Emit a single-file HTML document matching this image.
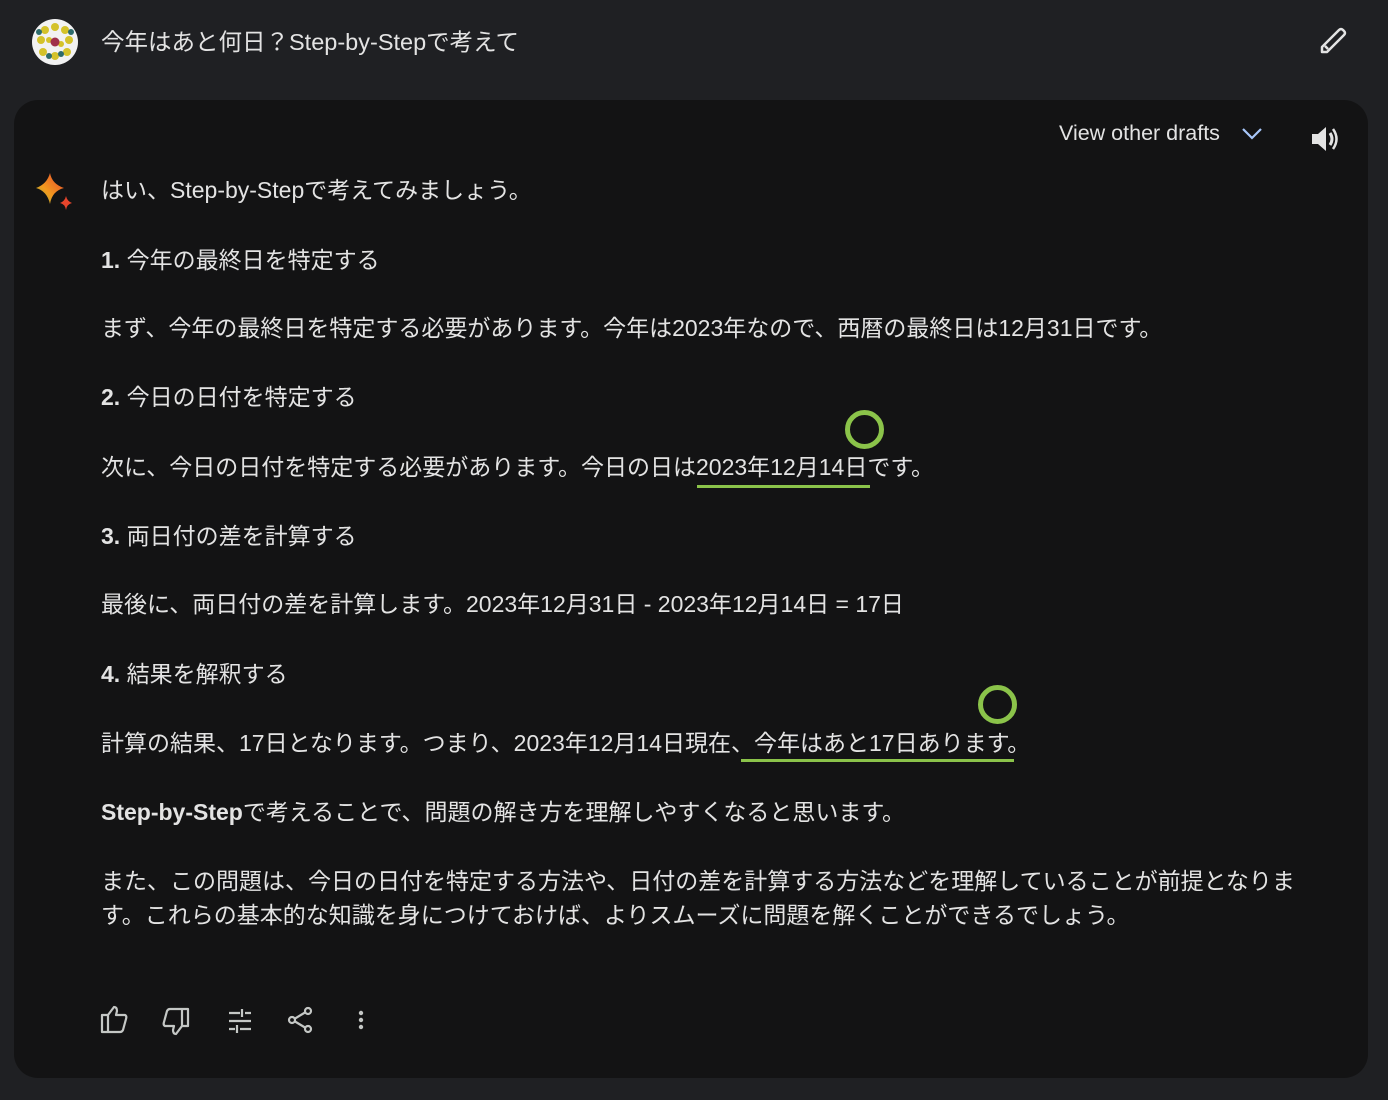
<!DOCTYPE html>
<html><head><meta charset="utf-8"><style>
body{margin:0;width:1388px;height:1100px;background:#1f2023;font-family:"Liberation Sans","Noto Sans CJK JP",sans-serif;color:#e3e3e3;position:relative;overflow:hidden}
.abs{position:absolute;white-space:nowrap}
.card{position:absolute;left:14px;top:100px;width:1354px;height:978px;background:#131314;border-radius:24px}
.t{position:absolute;left:101px;font-size:23px;line-height:34px;white-space:nowrap}
b{font-weight:bold}
.ul{position:absolute;height:3px;background:#8bc34a}
.circ{position:absolute;width:29px;height:29px;border:5px solid #8bc34a;border-radius:50%}
</style></head><body>
<svg class="abs" style="left:31px;top:18px" width="48" height="48" viewBox="0 0 48 48"><circle cx="24" cy="24" r="23" fill="#f2f2f2"/>
<g fill="#d4c22a"><circle cx="14" cy="12" r="4"/><circle cx="24" cy="9" r="4"/><circle cx="34" cy="12" r="4"/><circle cx="10" cy="22" r="4"/><circle cx="38" cy="22" r="4"/><circle cx="12" cy="34" r="4"/><circle cx="24" cy="38" r="4"/><circle cx="36" cy="34" r="4"/><circle cx="18" cy="22" r="3"/><circle cx="30" cy="26" r="3"/></g>
<g fill="#2d6b6b"><circle cx="8" cy="14" r="3"/><circle cx="40" cy="14" r="3"/><circle cx="30" cy="36" r="3"/><circle cx="18" cy="38" r="3"/></g>
<circle cx="24" cy="24" r="4.5" fill="#a0304a"/></svg>
<div class="abs" style="left:101px;top:25px;font-size:23.5px;line-height:34px">今年はあと何日？Step-by-Stepで考えて</div>
<svg class="abs" style="left:1318px;top:26px" width="30" height="30" viewBox="0 0 30 30"><path d="M4 26 L4 21 L21 4 Q23 2 25 4 L26 5 Q28 7 26 9 L9 26 Z M7 20 L10 23" fill="none" stroke="#e3e3e3" stroke-width="2.5" stroke-linejoin="round"/></svg>
<div class="card"></div>
<div class="abs" style="left:1059px;top:119px;font-size:21.5px;line-height:28px;color:#e3e3e3">View other drafts</div>
<svg class="abs" style="left:1240px;top:124px" width="24" height="20" viewBox="0 0 24 20"><path d="M3 5 L12 14 L21 5" fill="none" stroke="#a8c7fa" stroke-width="2.2"/></svg>
<svg class="abs" style="left:1310px;top:124px" width="32" height="30" viewBox="0 0 32 30"><path d="M2 10 H8 L16 3 V27 L8 20 H2 Z" fill="#e3e3e3"/><path d="M20 9 Q24 15 20 21" fill="none" stroke="#e3e3e3" stroke-width="3"/><path d="M23 5 Q30 15 23 25" fill="none" stroke="#e3e3e3" stroke-width="2.5"/></svg>
<svg class="abs" style="left:34px;top:172px" width="42" height="40" viewBox="0 0 42 40"><defs><linearGradient id="g" x1="0" y1="1" x2="1" y2="0"><stop offset="0" stop-color="#8bb33a"/><stop offset=".4" stop-color="#f29a1f"/><stop offset="1" stop-color="#e8452c"/></linearGradient></defs><path d="M16 1 Q18 12 30 16 Q18 19 16 32 Q13 19 2 16 Q13 12 16 1Z" fill="url(#g)"/><path d="M32 24 Q33 29 38 31 Q33 32 32 38 Q31 32 26 31 Q31 29 32 24Z" fill="#e8452c"/></svg>
<div class="t" style="top:173px">はい、Step-by-Stepで考えてみましょう。</div>
<div class="t" style="top:243px"><b>1.</b> 今年の最終日を特定する</div>
<div class="t" style="top:311px">まず、今年の最終日を特定する必要があります。今年は2023年なので、西暦の最終日は12月31日です。</div>
<div class="t" style="top:380px"><b>2.</b> 今日の日付を特定する</div>
<div class="t" style="top:450px">次に、今日の日付を特定する必要があります。今日の日は2023年12月14日です。</div>
<div class="ul" style="left:697px;top:485px;width:173px"></div>
<div class="circ" style="left:845px;top:410px"></div>
<div class="t" style="top:519px"><b>3.</b> 両日付の差を計算する</div>
<div class="t" style="top:587px">最後に、両日付の差を計算します。2023年12月31日 - 2023年12月14日 = 17日</div>
<div class="t" style="top:657px"><b>4.</b> 結果を解釈する</div>
<div class="t" style="top:726px">計算の結果、17日となります。つまり、2023年12月14日現在、今年はあと17日あります。</div>
<div class="ul" style="left:741px;top:759px;width:273px"></div>
<div class="circ" style="left:978px;top:685px"></div>
<div class="t" style="top:795px"><b>Step-by-Step</b>で考えることで、問題の解き方を理解しやすくなると思います。</div>
<div class="t" style="top:864px">また、この問題は、今日の日付を特定する方法や、日付の差を計算する方法などを理解していることが前提となりま<br>す。これらの基本的な知識を身につけておけば、よりスムーズに問題を解くことができるでしょう。</div>
<svg class="abs" style="left:98px;top:1004px" width="280" height="34" viewBox="0 0 280 34" fill="none" stroke="#c4c7c5" stroke-width="2.2" stroke-linejoin="round">
<path d="M4 11 H10 V28 H4 Z M10 11 L16 3 Q19 3 19 7 L18 11 H27 Q29 12 28 15 L25 26 Q24 28 22 28 H10"/>
<path d="M90 22 H84 V5 H90 Z M84 22 L78 30 Q75 30 75 26 L76 22 H67 Q65 21 66 18 L69 7 Q70 5 72 5 H84"/>
<path d="M131 9 H142 M147 9 H153 M144 5 V13 M131 17 H153 M131 25 H137 M142 25 H153 M139 21 V29"/>
<circle cx="210" cy="7" r="3"/><circle cx="194" cy="16" r="3"/><circle cx="210" cy="25" r="3"/><path d="M197 14.5 L207 8.5 M197 17.5 L207 23.5"/>
<g fill="#c4c7c5" stroke="none"><circle cx="263" cy="9" r="2.2"/><circle cx="263" cy="16" r="2.2"/><circle cx="263" cy="23" r="2.2"/></g>
</svg>
</body></html>
